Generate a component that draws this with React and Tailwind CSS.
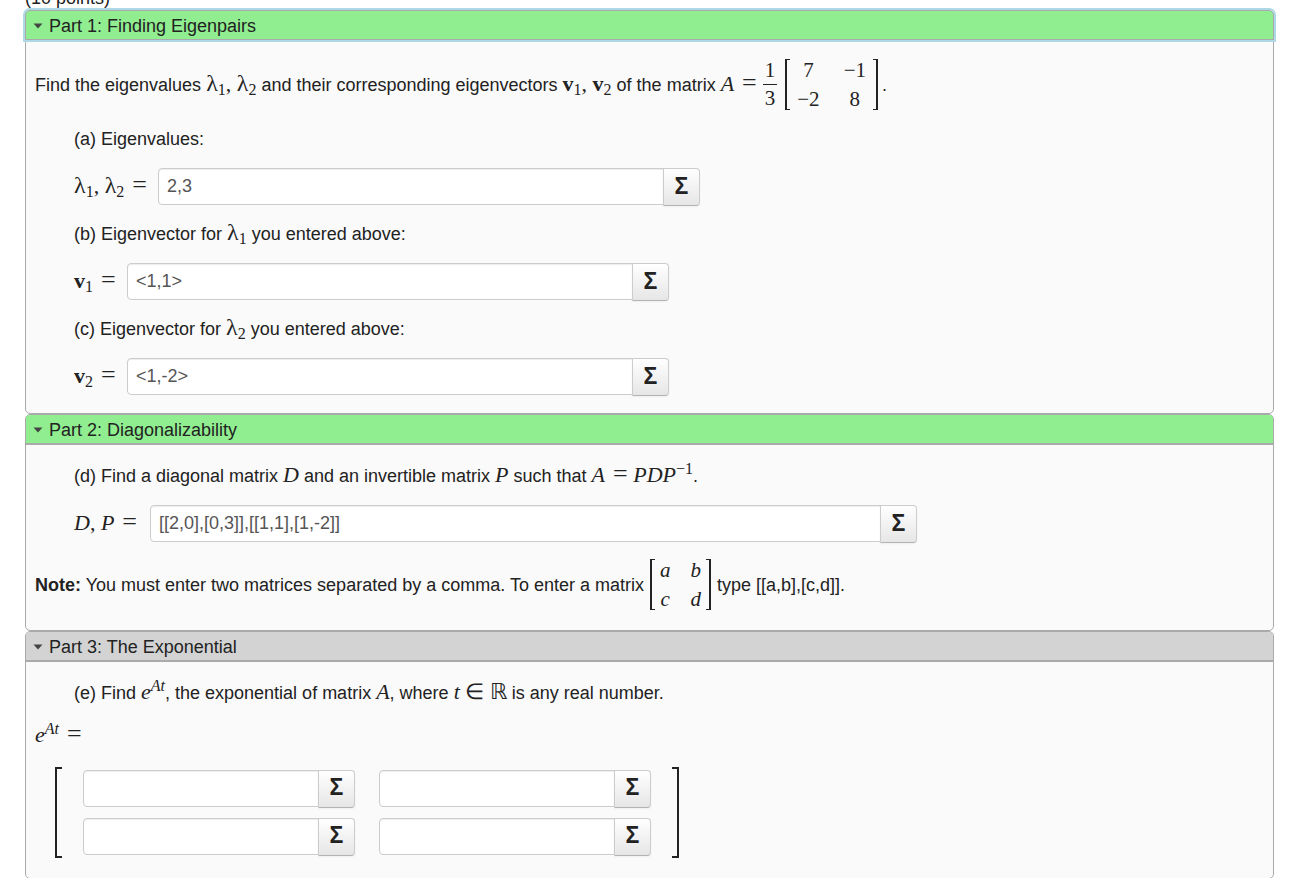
import React from "react";

const serif = "font-['Liberation_Serif',serif]";

function M({ children, className = "" }) {
  return <span className={`${serif} text-[22px] leading-[0] ${className}`}>{children}</span>;
}

function V({ children }) {
  return <i className="italic">{children}</i>;
}

function Lambda() {
  return <span className="text-[24px]">λ</span>;
}

function Sub({ children }) {
  return <sub className="bottom-[-4px] text-[16px] leading-[0] font-normal">{children}</sub>;
}

function Sup({ children }) {
  return <sup className="top-[-8px] text-[16px] leading-[0]">{children}</sup>;
}

function Eq() {
  return <span className="ml-2 text-[26px]">=</span>;
}

function Bracket({ right = false }) {
  return (
    <span
      aria-hidden="true"
      className={`block w-[5px] self-stretch border-y border-[#222] ${right ? "border-r-2" : "border-l-2"}`}
    />
  );
}

function Matrix({ cells, italic = false, className = "" }) {
  return (
    <span className={`inline-flex h-[51px] items-center ${className}`}>
      <Bracket />
      <span
        className={`${serif} grid grid-cols-2 items-center gap-y-2 text-center text-[21px] leading-[21px] ${
          italic ? "gap-x-5 px-[5px] italic" : "gap-x-6 px-[7px]"
        }`}
      >
        {cells.map((c) => (
          <span key={c}>{c}</span>
        ))}
      </span>
      <Bracket right />
    </span>
  );
}

function Answer({ id, label, value = "", width }) {
  return (
    <span className="inline-flex h-[38px]">
      <input
        id={id}
        aria-label={label}
        defaultValue={value}
        className={`h-[37px] min-w-0 ${width} rounded-l-[4px] border border-[#ccc] bg-white px-2 pb-px text-[18px] text-[#555] shadow-[inset_0_1px_1px_rgba(0,0,0,0.075)] outline-none`}
      />
      <button
        type="button"
        aria-label={`Equation editor for ${label}`}
        className="-ml-px flex w-[37px] items-center justify-center rounded-r-[4px] border border-[#ccc] border-b-[#b3b3b3] bg-linear-to-b from-white to-[#e6e6e6] pb-[2px] text-[23px] leading-none font-bold text-[#222] shadow-[0_1px_2px_rgba(0,0,0,0.05)]"
      >
        Σ
      </button>
    </span>
  );
}

function Part({ title, color, focused = false, children }) {
  return (
    <details open className="rounded-[5px] border border-[#aaa] bg-[#fafafa]">
      <summary
        className={`flex h-[30px] cursor-pointer list-none items-center gap-[6px] border-[#aaa] pt-[2px] pl-[7px] ${color} ${
          focused
            ? "-mx-px -mt-px mb-px rounded-t-[5px] border outline-2 outline-[#add8e6]"
            : "rounded-t-[4px] border-b-2"
        }`}
      >
        <svg width="10" height="6" viewBox="0 0 10 6" aria-hidden="true">
          <path d="M0.5 0.5h9L5 5.5z" fill="#444" />
        </svg>
        <span>{title}</span>
      </summary>
      <div className="flex flex-col gap-4 px-[9px] pt-[19px] pb-[17px]">{children}</div>
    </details>
  );
}

function Prompt({ children }) {
  return <p className="h-[25px] pl-[39px] leading-[25px] whitespace-nowrap">{children}</p>;
}

function Row({ id, label, labelWidth, name, value, width }) {
  return (
    <div className="flex items-center pl-[39px]">
      <label htmlFor={id} className={`${labelWidth} shrink-0 whitespace-nowrap`}>
        {label}
      </label>
      <Answer id={id} label={name} value={value} width={width} />
    </div>
  );
}

export default function App() {
  return (
    <main className="bg-white pr-[41px] pl-[25px] font-['Liberation_Sans',sans-serif] text-[18px] leading-6 text-[#222]">
      <div className="flex h-[10px] items-end overflow-hidden">
        <p>(10 points)</p>
      </div>

      <Part title="Part 1: Finding Eigenpairs" color="bg-[#90ee90]" focused>
        <p className="flex h-[51px] items-center pb-[2px] whitespace-nowrap">
          <span>
            Find the eigenvalues <M><Lambda /><Sub>1</Sub>, <Lambda /><Sub>2</Sub></M> and their corresponding
            eigenvectors <M><b>v</b><Sub>1</Sub>, <b>v</b><Sub>2</Sub></M> of the matrix{" "}
            <M><V>A</V><Eq /></M>
          </span>
          <span className={`${serif} ml-[6px] inline-flex flex-col text-center text-[21px] leading-[27px]`}>
            <span className="border-b border-[#222] px-[2px]">1</span>
            <span>3</span>
          </span>
          <Matrix cells={["7", "−1", "−2", "8"]} className="mr-1 ml-2" />
          <span>.</span>
        </p>
        <Prompt>(a) Eigenvalues:</Prompt>
        <Row
          id="eigenvalues"
          name="eigenvalues"
          labelWidth="w-[84px]"
          label={<M><Lambda /><Sub>1</Sub>, <Lambda /><Sub>2</Sub><Eq /></M>}
          value="2,3"
          width="w-[506px]"
        />
        <Prompt>(b) Eigenvector for <M><Lambda /><Sub>1</Sub></M> you entered above:</Prompt>
        <Row
          id="v1"
          name="first eigenvector"
          labelWidth="w-[53px]"
          label={<M><b>v</b><Sub>1</Sub><Eq /></M>}
          value="<1,1>"
          width="w-[506px]"
        />
        <Prompt>(c) Eigenvector for <M><Lambda /><Sub>2</Sub></M> you entered above:</Prompt>
        <Row
          id="v2"
          name="second eigenvector"
          labelWidth="w-[53px]"
          label={<M><b>v</b><Sub>2</Sub><Eq /></M>}
          value="<1,-2>"
          width="w-[506px]"
        />
      </Part>

      <Part title="Part 2: Diagonalizability" color="bg-[#90ee90]">
        <Prompt>
          (d) Find a diagonal matrix <M><V>D</V></M> and an invertible matrix <M><V>P</V></M> such that{" "}
          <M><V>A</V><Eq /> <V>PDP</V><Sup>−1</Sup></M>.
        </Prompt>
        <Row
          id="dp"
          name="D and P"
          labelWidth="w-[76px]"
          label={<M><V>D</V>, <V>P</V><Eq /></M>}
          value="[[2,0],[0,3]],[[1,1],[1,-2]]"
          width="w-[731px]"
        />
        <p className="mb-[3px] flex h-[51px] items-center whitespace-nowrap">
          <span><b>Note:</b> You must enter two matrices separated by a comma. To enter a matrix</span>
          <Matrix cells={["a", "b", "c", "d"]} italic className="mx-[6px]" />
          <span>type [[a,b],[c,d]].</span>
        </p>
      </Part>

      <Part title="Part 3: The Exponential" color="bg-[#d3d3d3]">
        <Prompt>
          (e) Find <M><V>e<Sup>At</Sup></V></M>, the exponential of matrix <M><V>A</V></M>, where{" "}
          <M><V>t</V> ∈ ℝ</M> is any real number.
        </Prompt>
        <p className="h-[29px] leading-[29px]">
          <M><V>e<Sup>At</Sup></V><Eq /></M>
        </p>
        <div className="mb-[3px] flex h-[91px] items-center pl-5">
          <span aria-hidden="true" className="w-[7px] self-stretch border-y-2 border-l-2 border-[#222]" />
          <div className="mx-[21px] grid grid-cols-[auto_auto] gap-x-6 gap-y-[10px]">
            <Answer id="e11" label="row 1 column 1" width="w-[236px]" />
            <Answer id="e12" label="row 1 column 2" width="w-[236px]" />
            <Answer id="e21" label="row 2 column 1" width="w-[236px]" />
            <Answer id="e22" label="row 2 column 2" width="w-[236px]" />
          </div>
          <span aria-hidden="true" className="w-[7px] self-stretch border-y-2 border-r-2 border-[#222]" />
        </div>
      </Part>
    </main>
  );
}
